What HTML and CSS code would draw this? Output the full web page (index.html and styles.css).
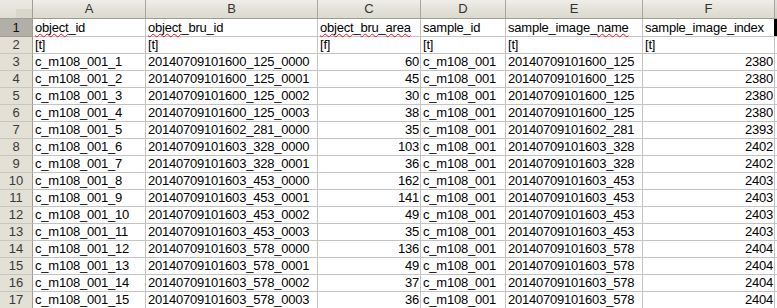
FILE: index.html
```html
<!DOCTYPE html>
<html>
<head>
<meta charset="utf-8">
<link rel="stylesheet" href="styles.css">
</head>
<body>
<div class="sheet">
  <div class="row colhead">
    <div class="corner"></div>
    <div class="ch">A</div><div class="ch">B</div><div class="ch">C</div><div class="ch">D</div><div class="ch">E</div><div class="ch">F</div><div class="ch last"></div>
  </div>
  <div class="row first">
    <div class="rh sel">1</div>
    <div class="c"><span class="sp">object</span>_id</div>
    <div class="c"><span class="sp">object</span>_bru_id</div>
    <div class="c"><span class="sp">object</span>_<span class="sp">bru</span>_<span class="sp">area</span></div>
    <div class="c">sample_id</div>
    <div class="c">sample_image_<span class="sp">name</span></div>
    <div class="c">sample_image_index</div>
    <div class="c g cur"></div>
  </div>
  <div class="row">
    <div class="rh">2</div>
    <div class="c">[t]</div><div class="c">[t]</div><div class="c">[f]</div><div class="c">[t]</div><div class="c">[t]</div><div class="c">[t]</div><div class="c g"></div>
  </div>
  <div class="row"><div class="rh">3</div><div class="c">c_m108_001_1</div><div class="c">20140709101600_125_0000</div><div class="c n">60</div><div class="c">c_m108_001</div><div class="c">20140709101600_125</div><div class="c n">2380</div><div class="c g"></div></div>
  <div class="row"><div class="rh">4</div><div class="c">c_m108_001_2</div><div class="c">20140709101600_125_0001</div><div class="c n">45</div><div class="c">c_m108_001</div><div class="c">20140709101600_125</div><div class="c n">2380</div><div class="c g"></div></div>
  <div class="row"><div class="rh">5</div><div class="c">c_m108_001_3</div><div class="c">20140709101600_125_0002</div><div class="c n">30</div><div class="c">c_m108_001</div><div class="c">20140709101600_125</div><div class="c n">2380</div><div class="c g"></div></div>
  <div class="row"><div class="rh">6</div><div class="c">c_m108_001_4</div><div class="c">20140709101600_125_0003</div><div class="c n">38</div><div class="c">c_m108_001</div><div class="c">20140709101600_125</div><div class="c n">2380</div><div class="c g"></div></div>
  <div class="row"><div class="rh">7</div><div class="c">c_m108_001_5</div><div class="c">20140709101602_281_0000</div><div class="c n">35</div><div class="c">c_m108_001</div><div class="c">20140709101602_281</div><div class="c n">2393</div><div class="c g"></div></div>
  <div class="row"><div class="rh">8</div><div class="c">c_m108_001_6</div><div class="c">20140709101603_328_0000</div><div class="c n">103</div><div class="c">c_m108_001</div><div class="c">20140709101603_328</div><div class="c n">2402</div><div class="c g"></div></div>
  <div class="row"><div class="rh">9</div><div class="c">c_m108_001_7</div><div class="c">20140709101603_328_0001</div><div class="c n">36</div><div class="c">c_m108_001</div><div class="c">20140709101603_328</div><div class="c n">2402</div><div class="c g"></div></div>
  <div class="row"><div class="rh">10</div><div class="c">c_m108_001_8</div><div class="c">20140709101603_453_0000</div><div class="c n">162</div><div class="c">c_m108_001</div><div class="c">20140709101603_453</div><div class="c n">2403</div><div class="c g"></div></div>
  <div class="row"><div class="rh">11</div><div class="c">c_m108_001_9</div><div class="c">20140709101603_453_0001</div><div class="c n">141</div><div class="c">c_m108_001</div><div class="c">20140709101603_453</div><div class="c n">2403</div><div class="c g"></div></div>
  <div class="row"><div class="rh">12</div><div class="c">c_m108_001_10</div><div class="c">20140709101603_453_0002</div><div class="c n">49</div><div class="c">c_m108_001</div><div class="c">20140709101603_453</div><div class="c n">2403</div><div class="c g"></div></div>
  <div class="row"><div class="rh">13</div><div class="c">c_m108_001_11</div><div class="c">20140709101603_453_0003</div><div class="c n">35</div><div class="c">c_m108_001</div><div class="c">20140709101603_453</div><div class="c n">2403</div><div class="c g"></div></div>
  <div class="row"><div class="rh">14</div><div class="c">c_m108_001_12</div><div class="c">20140709101603_578_0000</div><div class="c n">136</div><div class="c">c_m108_001</div><div class="c">20140709101603_578</div><div class="c n">2404</div><div class="c g"></div></div>
  <div class="row"><div class="rh">15</div><div class="c">c_m108_001_13</div><div class="c">20140709101603_578_0001</div><div class="c n">49</div><div class="c">c_m108_001</div><div class="c">20140709101603_578</div><div class="c n">2404</div><div class="c g"></div></div>
  <div class="row"><div class="rh">16</div><div class="c">c_m108_001_14</div><div class="c">20140709101603_578_0002</div><div class="c n">37</div><div class="c">c_m108_001</div><div class="c">20140709101603_578</div><div class="c n">2404</div><div class="c g"></div></div>
  <div class="row"><div class="rh">17</div><div class="c">c_m108_001_15</div><div class="c">20140709101603_578_0003</div><div class="c n">36</div><div class="c">c_m108_001</div><div class="c">20140709101603_578</div><div class="c n">2404</div><div class="c g"></div></div>
</div>
</body>
</html>
```
FILE: styles.css
```css
html, body {
  margin: 0;
  padding: 0;
  background: #ffffff;
  overflow: hidden;
}
.sheet {
  width: 777px;
  height: 308px;
  overflow: hidden;
  font-family: "Liberation Sans", Arial, sans-serif;
  font-size: 13px;
  letter-spacing: -0.22px;
  color: #000;
}
.row {
  display: grid;
  grid-template-columns: 33px 113px 172px 103px 85px 137px 132px 1fr;
  height: 17px;
}
.row.first { height: 18px; }
.row.colhead { height: 19px; }
.c {
  box-sizing: border-box;
  border-right: 1px solid #c4c4c4;
  border-bottom: 1px solid #c4c4c4;
  padding: 0 1px 0 2px;
  line-height: 16px;
  white-space: nowrap;
  overflow: hidden;
}
.first .c {
  line-height: 16px;
  padding-top: 1px;
  overflow: visible;
}
.c.n { text-align: right; }
.c.g { border-right: none; }
.c.cur { position: relative; overflow: visible; }
.c.cur::before {
  content: "";
  position: absolute;
  left: -1px;
  top: 0;
  width: 3px;
  height: 17px;
  background: #000;
}
.sp {
  text-decoration-line: underline;
  text-decoration-style: wavy;
  text-decoration-color: #e8141e;
  text-decoration-thickness: 1px;
  text-underline-offset: 1px;
  text-decoration-skip-ink: none;
}
.rh {
  box-sizing: border-box;
  background: #e3e0d6;
  border-right: 1px solid #9f9d95;
  border-bottom: 1px solid #c9c6bb;
  text-align: center;
  line-height: 16px;
  color: #3a3a3a;
  letter-spacing: 0;
}
.rh.sel {
  background: #b1afa7;
  color: #111;
  line-height: 17px;
  border-bottom-color: #9f9d95;
}
.colhead .corner {
  box-sizing: border-box;
  background: linear-gradient(#ebe9e2, #e0ddd3);
  border-right: 1px solid #9f9d95;
  border-bottom: 1px solid #9f9d95;
  position: relative;
}
.colhead .corner::after {
  content: "";
  position: absolute;
  left: 16px;
  top: 9px;
  right: 0;
  bottom: 0;
  background: #d9d6cb;
}
.ch {
  box-sizing: border-box;
  background: linear-gradient(#efeee9 0%, #e6e4dc 40%, #dcd9ce 100%);
  border-right: 1px solid #a8a69e;
  border-bottom: 1px solid #9f9d95;
  text-align: center;
  line-height: 18px;
  color: #333;
  letter-spacing: 0;
}
.ch.last {
  border-right: none;
  background: linear-gradient(#e3e1d9, #d3d0c5);
}
```
